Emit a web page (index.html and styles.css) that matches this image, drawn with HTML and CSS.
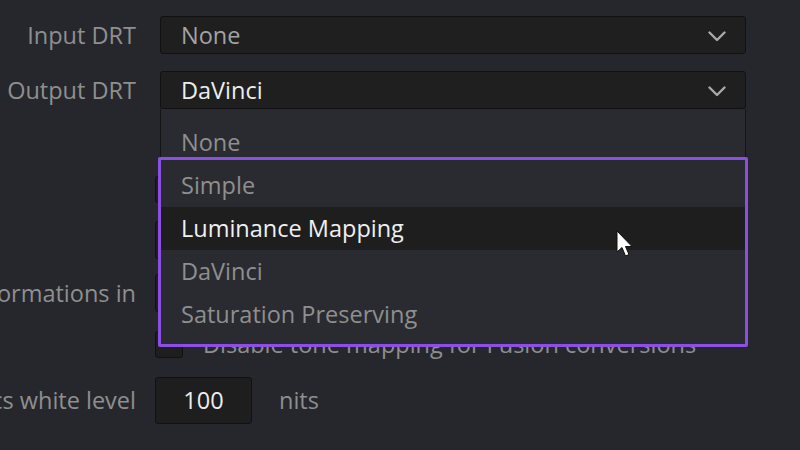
FILE: index.html
```html
<!DOCTYPE html>
<html>
<head>
<meta charset="utf-8">
<link rel="stylesheet" href="styles.css">
</head>
<body>
<div class="panel">
  <div class="row r1">
    <div class="lbl"><span>Input DRT</span></div>
    <div class="select">
      <span class="val">None</span>
      <svg class="chev" width="18" height="11" viewBox="0 0 18 11"><path d="M1.5 1.5 L9 9 L16.5 1.5" fill="none" stroke="#a9a9a9" stroke-width="2.4" stroke-linecap="round" stroke-linejoin="round"/></svg>
    </div>
  </div>
  <div class="row r2">
    <div class="lbl"><span>Output DRT</span></div>
    <div class="select-wrap">
      <div class="select">
        <span class="val bright">DaVinci</span>
        <svg class="chev" width="18" height="11" viewBox="0 0 18 11"><path d="M1.5 1.5 L9 9 L16.5 1.5" fill="none" stroke="#a9a9a9" stroke-width="2.4" stroke-linecap="round" stroke-linejoin="round"/></svg>
      </div>
      <ul class="menu">
        <li>None</li>
        <li>Simple</li>
        <li class="hover">Luminance Mapping</li>
        <li>DaVinci</li>
        <li>Saturation Preserving</li>
      </ul>
      <div class="annot"></div>
      <svg class="cursor" width="20" height="30" viewBox="0 0 20 30"><path d="M1 1 L1 22 L6 17.5 L9.5 26 L13 24.5 L9.5 16.5 L16 16.5 Z" fill="#ffffff" stroke="#111" stroke-width="1" stroke-linejoin="round"/></svg>
    </div>
  </div>
  <div class="row r3">
    <div class="lbl"></div>
    <div class="checkbox"></div>
  </div>
  <div class="row r4">
    <div class="lbl"></div>
    <div class="select ghost"></div>
  </div>
  <div class="row r5">
    <div class="lbl"><span>Apply resize transformations in</span></div>
    <div class="select ghost"></div>
  </div>
  <div class="row r6">
    <div class="lbl"></div>
    <div class="check-row"><div class="checkbox"></div><span class="dim">Disable tone mapping for Fusion conversions</span></div>
  </div>
  <div class="row r7">
    <div class="lbl"><span>Graphics white level</span></div>
    <div class="num-row"><div class="num">100</div><span class="dim">nits</span></div>
  </div>
</div>
</body>
</html>
```
FILE: styles.css
```css
html, body {
  margin: 0;
  padding: 0;
  background: #26272d;
  width: 800px;
  height: 450px;
  overflow: hidden;
  font-family: "Open Sans", "Noto Sans", sans-serif;
  font-size: 23.5px;
  line-height: 1.3;
  color: #8e8e8e;
}
.panel {
  padding-top: 16px;
}
.row {
  display: grid;
  grid-template-columns: 136px 1fr;
  column-gap: 19px;
  align-items: center;
}
.lbl {
  display: flex;
  justify-content: flex-end;
  white-space: nowrap;
  color: #8f8f8f;
}
.r2 { margin-top: 17px; position: relative; z-index: 5; }
.r3 { margin-top: 67px; }
.r4 { margin-top: 18px; }
.r5 { margin-top: 15px; }
.r6 { margin-top: 19px; }
.r7 { margin-top: 19px; }

.select {
  margin-left: 5px;
  width: 586px;
  height: 38px;
  box-sizing: border-box;
  background: #1f1f1f;
  border: 1px solid #111;
  border-radius: 3px;
  display: flex;
  align-items: center;
  justify-content: space-between;
  padding: 0 19px 0 20px;
}
.val { color: #a3a3a3; }
.val.bright { color: #ededed; }
.chev { margin-top: 2px; }
.select.ghost { margin-left: 0; width: 591px; }

.select-wrap { position: relative; }
.menu {
  position: absolute;
  left: 5px;
  top: 38px;
  width: 586px;
  box-sizing: border-box;
  margin: 0;
  padding: 12px 0 10px 0;
  list-style: none;
  background: #2a2b31;
  border: 1px solid #141414;
  border-top: none;
}
.menu li {
  height: 43px;
  line-height: 43px;
  padding-left: 20px;
  color: #8f8f8f;
}
.menu li.hover {
  background: #1e1e1f;
  color: #f0f0f0;
}
.annot {
  position: absolute;
  left: 3px;
  top: 86px;
  width: 590px;
  height: 190px;
  box-sizing: border-box;
  border: 3px solid #8c4fe6;
  border-radius: 2px;
}
.cursor {
  position: absolute;
  left: 461px;
  top: 159px;
}

.checkbox {
  width: 28px;
  height: 27px;
  box-sizing: border-box;
  background: #1e1e1e;
  border: 1px solid #111;
  border-radius: 3px;
}
.check-row {
  display: flex;
  align-items: center;
  gap: 20px;
  height: 27px;
  line-height: 27px;
  white-space: nowrap;
}
.dim { color: #8e8e8e; }
.num-row {
  display: flex;
  align-items: center;
  gap: 27px;
}
.num {
  width: 97px;
  height: 47px;
  box-sizing: border-box;
  background: #1e1e1e;
  border: 1px solid #111;
  border-radius: 3px;
  display: flex;
  align-items: center;
  justify-content: center;
  color: #ededed;
}
```
